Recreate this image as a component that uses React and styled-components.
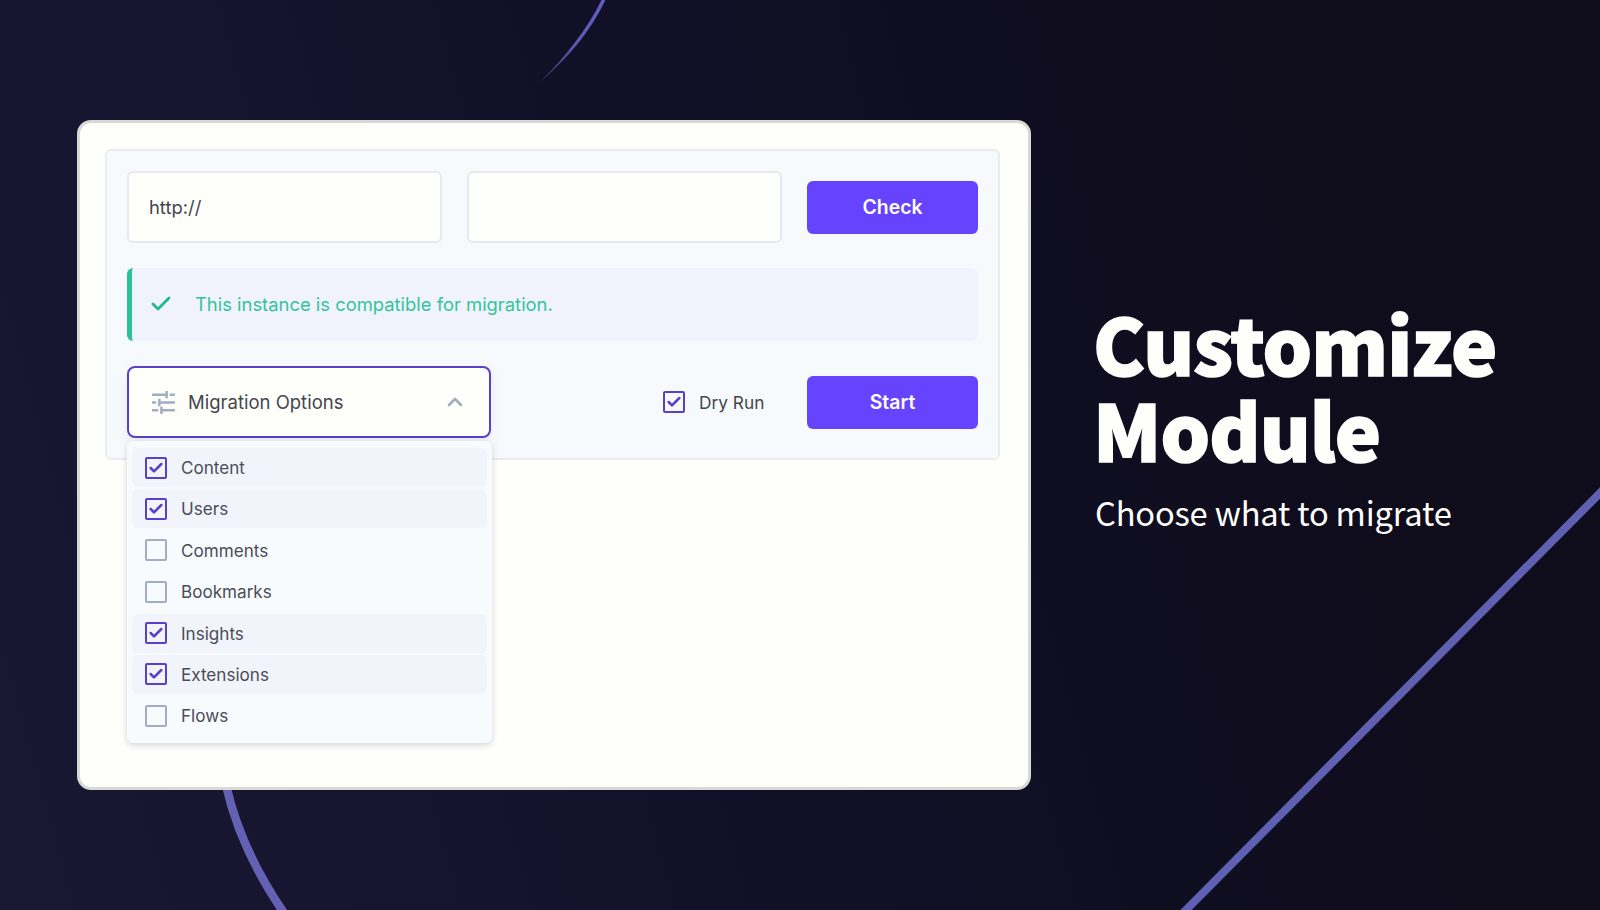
import React from 'react';
import styled, { createGlobalStyle } from 'styled-components';
import { Check, ChevronUp } from 'lucide-react';

const GlobalStyle = createGlobalStyle`
  html, body { margin: 0; padding: 0; background: #100f22; }
  * { box-sizing: border-box; }
`;

const options = [
  { label: 'Content', checked: true },
  { label: 'Users', checked: true },
  { label: 'Comments', checked: false },
  { label: 'Bookmarks', checked: false },
  { label: 'Insights', checked: true },
  { label: 'Extensions', checked: true },
  { label: 'Flows', checked: false },
];

export default function App() {
  return (
    <Page>
      <GlobalStyle />
      <Backdrop viewBox="0 0 1600 910" aria-hidden="true">
        <defs>
          <linearGradient id="fade" x1="540" y1="82" x2="604" y2="0" gradientUnits="userSpaceOnUse">
            <stop offset="0" stopColor="#35335f" />
            <stop offset="0.5" stopColor="#5d5bb2" />
            <stop offset="1" stopColor="#5f5cc0" />
          </linearGradient>
        </defs>
        <path d="M540 82 C566 56 587 30 602 -1 L606 -1 C591 31 568 58 540 82 Z" fill="url(#fade)" />
        <path d="M226 785 C236 830 256 872 284 913" stroke="#6460b4" strokeWidth="8.5" fill="none" />
        <path d="M1603 490 L1183 913" stroke="#5f60b2" strokeWidth="8" fill="none" />
      </Backdrop>
      <Card>
        <Panel>
          <TopRow>
            <TextInput>http://</TextInput>
            <TextInput />
            <PrimaryButton>Check</PrimaryButton>
          </TopRow>
          <Notice>
            <Check size={24} strokeWidth={2.8} />
            <span>This instance is compatible for migration.</span>
          </Notice>
          <ActionRow>
            <SelectWrap>
              <SelectBox>
                <SlidersIcon />
                <SelectLabel>Migration Options</SelectLabel>
                <Chevron size={24} strokeWidth={2.6} />
              </SelectBox>
              <Menu>
                {options.map(option => (
                  <MenuRow key={option.label} $checked={option.checked}>
                    <Box $checked={option.checked}>
                      {option.checked && <Check size={16} strokeWidth={3.8} />}
                    </Box>
                    {option.label}
                  </MenuRow>
                ))}
              </Menu>
            </SelectWrap>
            <DryRun>
              <Box $checked>
                <Check size={16} strokeWidth={3.8} />
              </Box>
              Dry Run
            </DryRun>
            <PrimaryButton>Start</PrimaryButton>
          </ActionRow>
        </Panel>
      </Card>
      <Copy>
        <Title>Customize<br />Module</Title>
        <Subtitle>Choose what to migrate</Subtitle>
      </Copy>
    </Page>
  );
}

function SlidersIcon() {
  return (
    <svg width="25" height="25" viewBox="0 0 24 24" fill="none" stroke="#a3adc2" strokeWidth="2.4" style={{ flexShrink: 0 }}>
      <path d="M1 4.5h13M18 4.5h5M15 1v7M1 12h4M9 12h14M8 8.5v7M1 19.5h6M11 19.5h12M10 16v7" />
    </svg>
  );
}

const Page = styled.div`
  position: relative;
  width: 1600px;
  height: 910px;
  overflow: hidden;
  display: flex;
  align-items: flex-start;
  padding: 120px 0 0 77px;
  background: linear-gradient(75deg, #1a1732 0%, #15132d 28%, #100f25 50%, #0f0d1c 80%);
  font-family: Inter, "Liberation Sans", sans-serif;
`;

const Backdrop = styled.svg`
  position: absolute;
  inset: 0;
  width: 1600px;
  height: 910px;
`;

const Card = styled.div`
  position: relative;
  width: 954px;
  height: 670px;
  padding: 26px 26px 26px 25px;
  background: #fefefb;
  border: 3px solid #d8d8d4;
  border-radius: 14px;
  flex-shrink: 0;
`;

const Panel = styled.div`
  width: 895px;
  height: 311px;
  padding: 20px;
  display: flex;
  flex-direction: column;
  background: #f7fafc;
  border: 2px solid #e9edf1;
  border-radius: 6px;
`;

const TopRow = styled.div`
  display: flex;
  align-items: center;
  height: 72px;
`;

const TextInput = styled.div`
  width: 316px;
  height: 72px;
  margin-right: 25px;
  padding: 0 20px;
  display: flex;
  align-items: center;
  background: #fefefb;
  border: 2px solid #e6e9ed;
  border-radius: 6px;
  color: #44464f;
  font-size: 18.4px;
`;

const PrimaryButton = styled.button`
  width: 171px;
  height: 53px;
  flex-shrink: 0;
  border: 0;
  border-radius: 6px;
  background: #6644ff;
  color: #fdfdfb;
  font: 600 19.4px Inter, "Liberation Sans", sans-serif;
`;

const Notice = styled.div`
  display: flex;
  align-items: center;
  gap: 22px;
  height: 73px;
  margin-top: 25px;
  padding: 0 0 2px 17px;
  background: #f0f3fc;
  border-left: 5px solid #2bc29a;
  border-radius: 6px;
  color: #35c39c;
  font-size: 18.4px;
  svg { color: #22b88f; flex-shrink: 0; }
`;

const ActionRow = styled.div`
  display: flex;
  align-items: center;
  height: 72px;
  margin-top: 25px;
`;

const SelectWrap = styled.div`
  position: relative;
  width: 366px;
`;

const SelectBox = styled.div`
  display: flex;
  align-items: center;
  height: 72px;
  padding: 0 22px 0 22px;
  gap: 12px;
  background: #fefefb;
  border: 2.5px solid #5a3fcb;
  border-radius: 8px;
  box-shadow: 0 4px 14px rgba(90, 70, 200, 0.08);
  color: #44464f;
  font-size: 18.5px;
`;

const SelectLabel = styled.span`
  flex: 1;
`;

const Chevron = styled(ChevronUp)`
  color: #a3adc2;
`;

const Menu = styled.div`
  position: absolute;
  top: 75px;
  left: 0;
  width: 365px;
  height: 302px;
  padding: 7px 5px;
  display: flex;
  flex-direction: column;
  gap: 2.4px;
  background: #f8fbfd;
  border-radius: 6px;
  box-shadow: 0 2px 6px rgba(40, 50, 80, 0.2);
`;

const MenuRow = styled.div`
  display: flex;
  align-items: center;
  gap: 14px;
  height: 39px;
  flex-shrink: 0;
  padding-left: 13px;
  border-radius: 6px;
  background: ${props => (props.$checked ? '#f2f4fb' : 'transparent')};
  color: #4a4c58;
  font-size: 17.1px;
`;

const Box = styled.span`
  display: flex;
  align-items: center;
  justify-content: center;
  width: 22px;
  height: 22px;
  flex-shrink: 0;
  border: 2.7px solid ${props => (props.$checked ? '#5a3fcb' : '#a3adc2')};
  border-radius: 2px;
  color: #5a3fcb;
`;

const DryRun = styled.div`
  display: flex;
  align-items: center;
  gap: 14px;
  width: 101px;
  margin-left: 172px;
  margin-right: 43px;
  white-space: nowrap;
  color: #44464f;
  font-size: 17.3px;
`;

const Copy = styled.div`
  position: relative;
  margin: 179px 0 0 62px;
  color: #fefefb;
  font-family: "Noto Sans CJK SC", "Noto Sans", sans-serif;
`;

const Title = styled.h1`
  margin: 0;
  font-size: 78px;
  font-weight: 900;
  line-height: 86px;
  letter-spacing: -0.9px;
  -webkit-text-stroke: 1.6px #fefefb;
`;

const Subtitle = styled.p`
  margin: 17px 0 0 2px;
  font-size: 32.7px;
  font-weight: 400;
  letter-spacing: -0.2px;
  white-space: nowrap;
`;
